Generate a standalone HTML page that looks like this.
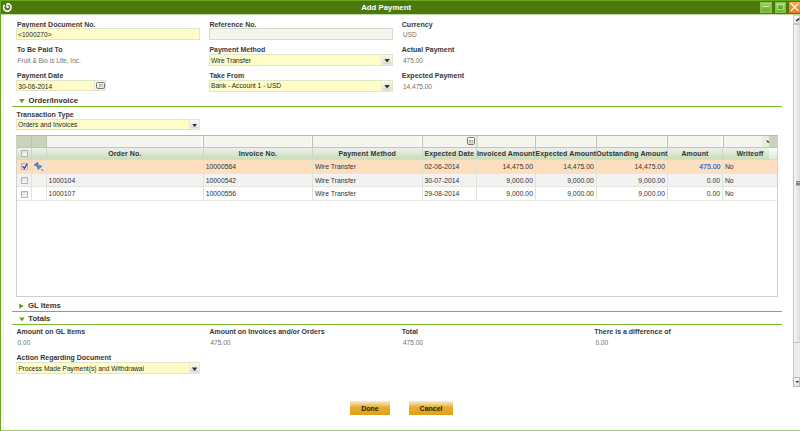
<!DOCTYPE html>
<html><head><meta charset="utf-8">
<style>
*{box-sizing:border-box;margin:0;padding:0}
html,body{width:800px;height:431px;overflow:hidden;background:#fff;font-family:"Liberation Sans",sans-serif}
.a{position:absolute;white-space:nowrap}
.lb{position:absolute;white-space:nowrap;font-weight:bold;font-size:7px;line-height:7px;color:#383838;margin-top:0.5px}
.vl{position:absolute;white-space:nowrap;font-size:6.5px;line-height:7px;color:#6f6f6f;margin-top:0.2px;transform:scaleY(1.17);transform-origin:0 5.8px}
.inp{position:absolute;background:#fffcc8;border:0.8px solid #e0e6c9}
.inp span{position:absolute;left:1px;font-size:6.65px;line-height:7px;color:#262626;white-space:nowrap;margin-top:-0.4px}
.dis{position:absolute;background:#f3f5ef;border:1px solid #d6dccb}
.btn{position:absolute;top:0;bottom:0;right:0;width:10.4px;background:linear-gradient(#f4f7ef 0%,#e9efe2 45%,#c9d8ba 100%);box-shadow:inset 0 0 0 0.8px rgba(255,255,255,.6);border-left:0.6px solid #e2ead8}
.btn:after{content:"";position:absolute;left:2.3px;top:4.1px;width:5.4px;height:3.4px;background:#303030;clip-path:polygon(0 0,100% 0,50% 100%)}
.sec{position:absolute;font-weight:bold;font-size:7.7px;line-height:8px;color:#333;white-space:nowrap}
.gl{position:absolute;height:1.25px;background:#7dbb2e;margin-top:0.5px}
.tri-d{position:absolute;width:5.6px;height:4.1px;background:#5ea816;clip-path:polygon(0 0,100% 0,50% 100%)}
.tri-r{position:absolute;width:4.6px;height:5.4px;background:#5ea816;clip-path:polygon(0 0,100% 50%,0 100%)}
.hd{font-weight:bold;font-size:7px;letter-spacing:0.1px;line-height:11.8px;height:11.8px;text-align:center;color:#333;overflow:visible}
.cl{font-size:6.85px;line-height:13.72px;color:#333}
</style></head><body>
<!-- window frame -->
<div class="a" style="left:0;top:0;width:800px;height:1px;background:#69a81b"></div>
<div class="a" style="left:0;top:1px;width:800px;height:12.5px;background:#4c790d"></div>
<div class="a" style="left:0;top:13.5px;width:800px;height:0.8px;background:#c5d8ad"></div>
<div class="a" style="left:0;top:430px;width:800px;height:1px;background:#a6d06e"></div>
<div class="a" style="left:0;top:0;width:1.1px;height:431px;background:#69a81b"></div>
<div class="a" style="left:3.2px;top:14.5px;width:0.6px;height:415px;background:#eeeeee"></div>
<!-- logo -->
<svg class="a" style="left:0;top:0" width="16" height="14" viewBox="0 0 16 14">
<path d="M6.95 3.65 A3.75 3.75 0 1 1 4.55 4.85" fill="none" stroke="#fff" stroke-width="1.55"/>
<path d="M6.95 3.4 L6.95 7.6" stroke="#fff" stroke-width="1.2"/>
<circle cx="7.7" cy="7.1" r="1.25" fill="#fff"/>
</svg>
<div class="a" style="left:361.2px;top:4px;font-weight:bold;font-size:7.8px;line-height:8px;color:#fff">Add Payment</div>
<!-- title buttons -->
<div class="a" style="left:760.3px;top:2px;width:11.3px;height:10.7px;background:linear-gradient(#9fd16c,#7dbd3a 45%,#6aae22);border:0.6px solid #86c050;box-shadow:inset 0 0 0 0.6px rgba(190,230,150,.45)"></div>
<div class="a" style="left:762.9px;top:6.1px;width:6.1px;height:1.4px;background:#dbeecb"></div>
<div class="a" style="left:775px;top:2px;width:10.7px;height:10.7px;background:linear-gradient(#9fd16c,#7dbd3a 45%,#6aae22);border:0.6px solid #86c050;box-shadow:inset 0 0 0 0.6px rgba(190,230,150,.45)"></div>
<div class="a" style="left:777px;top:3.9px;width:6.7px;height:5.7px;border:0.8px solid #b5de94;background:linear-gradient(#7cc040,#5aa018)"></div>
<div class="a" style="left:789px;top:2px;width:11px;height:10.7px;background:linear-gradient(#f6ad52,#e98d28 50%,#e3841c)"></div>
<svg class="a" style="left:789px;top:1.9px" width="11" height="11" viewBox="0 0 11 11"><path d="M2 1.5 L9.4 8.9 M9.4 1.5 L2 8.9" stroke="#fff" stroke-width="1.25"/></svg>
<!-- scrollbar -->
<div class="a" style="left:793px;top:14.5px;width:7px;height:372px;background:#ececec;border-left:1px solid #c8c8c8"></div>
<div class="a" style="left:793px;top:14.5px;width:7px;height:9.5px;background:linear-gradient(#fafafa,#e2e2e2);border:0.7px solid #cdcdcd"></div>
<div class="a" style="left:793.3px;top:24px;width:8px;height:319px;background:linear-gradient(90deg,#f8f8f8,#dadada);border:0.7px solid #c4c4c4;border-radius:0 0 2px 2px"></div>
<div class="a" style="left:793px;top:377px;width:7px;height:9.5px;background:linear-gradient(#fafafa,#dedede);border:0.7px solid #bdbdbd"></div>
<svg class="a" style="left:793px;top:14.5px" width="7" height="10" viewBox="0 0 7 10"><path d="M3.6 5.6 L5.9 3.9" stroke="#2a2a2a" stroke-width="1.4" stroke-linecap="round"/></svg>
<svg class="a" style="left:793px;top:377px" width="7" height="10" viewBox="0 0 7 10"><path d="M2.4 4.0 L6.2 4.0 L4.3 6.0 Z" fill="#333"/></svg>
<div class="a" style="left:796.2px;top:181.2px;width:3.8px;height:4.8px;background:repeating-linear-gradient(#858585 0 1px,#b5b5b5 1px 1.6px)"></div>

<!-- column 1 -->
<div class="lb" style="left:17px;top:20.4px">Payment Document No.</div>
<div class="inp" style="left:16px;top:28.4px;width:183.8px;height:11.2px"><span style="top:2.2px">&lt;1000270&gt;</span></div>
<div class="lb" style="left:17px;top:45.6px">To Be Paid To</div>
<div class="vl" style="left:17.6px;top:56.8px">Fruit &amp; Bio is Life, Inc.</div>
<div class="lb" style="left:17px;top:71.8px">Payment Date</div>
<div class="inp" style="left:16.2px;top:80.2px;width:78.6px;height:10.7px"><span style="top:2px">30-06-2014</span></div>
<div class="a" style="left:94.3px;top:80.1px;width:11.6px;height:10.9px;background:#f1f6ea;border:0.8px solid #dce8d0"></div>
<div class="a" style="left:96.1px;top:81.8px;width:8.8px;height:7.1px;border:1px solid #787878;border-radius:1.7px;background:linear-gradient(#fff,#dedede)"></div>
<div class="a" style="left:98.6px;top:84.3px;width:4.6px;height:2.8px;background:repeating-linear-gradient(90deg,rgba(140,140,140,.45) 0 0.6px,transparent 0.6px 1.5px),linear-gradient(rgba(140,140,140,.5) 0 0.6px,transparent 0.6px)"></div>

<!-- column 2 -->
<div class="lb" style="left:209.4px;top:20.4px">Reference No.</div>
<div class="dis" style="left:209px;top:28.4px;width:183.5px;height:11.2px"></div>
<div class="lb" style="left:209.4px;top:45.6px">Payment Method</div>
<div class="inp" style="left:209px;top:54px;width:183.5px;height:11.6px"><span style="top:2px">Wire Transfer</span><i class="btn"></i></div>
<div class="lb" style="left:209.4px;top:71.8px">Take From</div>
<div class="inp" style="left:209px;top:80px;width:183.5px;height:11.6px"><span style="top:1.6px">Bank - Account 1 - USD</span><i class="btn"></i></div>

<!-- column 3 -->
<div class="lb" style="left:401.8px;top:20.4px">Currency</div>
<div class="vl" style="left:403px;top:31.2px">USD</div>
<div class="lb" style="left:401.8px;top:45.6px">Actual Payment</div>
<div class="vl" style="left:403px;top:57.2px">475.00</div>
<div class="lb" style="left:401.8px;top:71.8px">Expected Payment</div>
<div class="vl" style="left:403px;top:82.6px">14,475.00</div>

<!-- Order/Invoice section -->
<div class="tri-d" style="left:19.05px;top:99.1px"></div>
<div class="sec" style="left:28.5px;top:96.5px">Order/Invoice</div>
<div class="gl" style="left:12px;top:105.2px;width:770.3px"></div>
<div class="lb" style="left:16.5px;top:110.7px">Transaction Type</div>
<div class="inp" style="left:16px;top:118.5px;width:184px;height:11px"><span style="top:2px">Orders and Invoices</span><i class="btn"></i></div>

<!-- grid placeholder -->
<!--GRID-->
<div class="a" style="left:16px;top:135px;width:762px;height:161.5px;border:0.8px solid #cfd1cb;border-top-color:#b5b9ae;background:#fff"></div>
<div class="a" style="left:16.8px;top:135.8px;width:29.4px;height:11.199999999999989px;background:#c9d3b9"></div>
<div class="a" style="left:46.2px;top:135.8px;width:723.0px;height:11.199999999999989px;background:#f3f5ee"></div>
<div class="a" style="left:769.2px;top:135.8px;width:8.299999999999955px;height:11.199999999999989px;background:#c9d3b9"></div>
<div class="a" style="left:31.2px;top:135.8px;width:0.8px;height:11.199999999999989px;background:#bcc2b4"></div>
<div class="a" style="left:45.8px;top:135.8px;width:0.8px;height:11.199999999999989px;background:#bcc2b4"></div>
<div class="a" style="left:201.2px;top:135.8px;width:1.5px;height:11.199999999999989px;background:#fbfcf9"></div>
<div class="a" style="left:202.7px;top:135.8px;width:1.2px;height:11.199999999999989px;background:#bcc2b4"></div>
<div class="a" style="left:310.5px;top:135.8px;width:1.5px;height:11.199999999999989px;background:#fbfcf9"></div>
<div class="a" style="left:312px;top:135.8px;width:1.2px;height:11.199999999999989px;background:#bcc2b4"></div>
<div class="a" style="left:420.0px;top:135.8px;width:1.5px;height:11.199999999999989px;background:#fbfcf9"></div>
<div class="a" style="left:421.5px;top:135.8px;width:1.2px;height:11.199999999999989px;background:#bcc2b4"></div>
<div class="a" style="left:533.5px;top:135.8px;width:1.5px;height:11.199999999999989px;background:#fbfcf9"></div>
<div class="a" style="left:535px;top:135.8px;width:1.2px;height:11.199999999999989px;background:#bcc2b4"></div>
<div class="a" style="left:594.5px;top:135.8px;width:1.5px;height:11.199999999999989px;background:#fbfcf9"></div>
<div class="a" style="left:596px;top:135.8px;width:1.2px;height:11.199999999999989px;background:#bcc2b4"></div>
<div class="a" style="left:665.5px;top:135.8px;width:1.5px;height:11.199999999999989px;background:#fbfcf9"></div>
<div class="a" style="left:667px;top:135.8px;width:1.2px;height:11.199999999999989px;background:#bcc2b4"></div>
<div class="a" style="left:721.0px;top:135.8px;width:1.5px;height:11.199999999999989px;background:#fbfcf9"></div>
<div class="a" style="left:722.5px;top:135.8px;width:1.2px;height:11.199999999999989px;background:#bcc2b4"></div>
<div class="a" style="left:464.6px;top:135.8px;width:11.6px;height:11.199999999999989px;background:#eef3e4"></div>
<div class="a" style="left:476.2px;top:135.8px;width:1.4px;height:11.199999999999989px;background:#d5e0c8"></div>
<div class="a" style="left:466.5px;top:137.4px;width:8.6px;height:7.5px;border:1px solid #787878;border-radius:1.6px;background:linear-gradient(#fff,#d8d8d8)"></div>
<div class="a" style="left:469px;top:140.3px;width:4.4px;height:2.6px;background:repeating-linear-gradient(90deg,rgba(140,140,140,.45) 0 0.6px,transparent 0.6px 1.5px),linear-gradient(rgba(140,140,140,.5) 0 0.6px,transparent 0.6px)"></div>
<div class="a" style="left:761.9px;top:135.8px;width:7.3px;height:11.199999999999989px;background:#e6eedd"></div>
<svg class="a" style="left:760px;top:136px" width="10" height="10" viewBox="0 0 10 10"><path d="M5.9 4.5 L8.9 5.0 L8.5 7.2 Z" fill="#222"/></svg>
<div class="a" style="left:16.8px;top:147px;width:760.7px;height:0.8px;background:#c0c6b8"></div>
<div class="a" style="left:16.8px;top:147.8px;width:752.4000000000001px;height:11.799999999999983px;background:linear-gradient(#eef0ec,#c7dbb6)"></div>
<div class="a" style="left:769.2px;top:147.8px;width:8.299999999999955px;height:11.799999999999983px;background:linear-gradient(#fbfcfa,#dde9d2)"></div>
<div class="a" style="left:31.200000000000003px;top:147.8px;width:0.8px;height:11.799999999999983px;background:#cdd3c6"></div>
<div class="a" style="left:45.800000000000004px;top:147.8px;width:0.8px;height:11.799999999999983px;background:#cdd3c6"></div>
<div class="a" style="left:202.9px;top:147.8px;width:0.8px;height:11.799999999999983px;background:#cdd3c6"></div>
<div class="a" style="left:312.1px;top:147.8px;width:0.8px;height:11.799999999999983px;background:#cdd3c6"></div>
<div class="a" style="left:421.6px;top:147.8px;width:0.8px;height:11.799999999999983px;background:#cdd3c6"></div>
<div class="a" style="left:475.90000000000003px;top:147.8px;width:0.8px;height:11.799999999999983px;background:#cdd3c6"></div>
<div class="a" style="left:535.1px;top:147.8px;width:0.8px;height:11.799999999999983px;background:#cdd3c6"></div>
<div class="a" style="left:595.9px;top:147.8px;width:0.8px;height:11.799999999999983px;background:#cdd3c6"></div>
<div class="a" style="left:667.1px;top:147.8px;width:0.8px;height:11.799999999999983px;background:#cdd3c6"></div>
<div class="a" style="left:722.1px;top:147.8px;width:0.8px;height:11.799999999999983px;background:#cdd3c6"></div>
<div class="a" style="left:20.7px;top:149.9px;width:7.2px;height:6.9px;border:0.8px solid #b2b3b0;border-radius:0.8px;background:linear-gradient(160deg,#d9d9d9,#f6f6f6 70%)"></div>
<div class="a hd" style="left:46.2px;width:157.10000000000002px;top:147.8px">Order No.</div>
<div class="a hd" style="left:203.3px;width:109.19999999999999px;top:147.8px">Invoice No.</div>
<div class="a hd" style="left:312.5px;width:109.5px;top:147.8px">Payment Method</div>
<div class="a hd" style="left:422px;width:54.30000000000001px;top:147.8px">Expected Date</div>
<div class="a hd" style="left:476.3px;width:59.19999999999999px;top:147.8px">Invoiced Amount</div>
<div class="a hd" style="left:535.5px;width:60.799999999999955px;top:147.8px">Expected Amount</div>
<div class="a hd" style="left:596.3px;width:71.20000000000005px;top:147.8px">Outstanding Amount</div>
<div class="a hd" style="left:667.5px;width:55.0px;top:147.8px">Amount</div>
<div class="a hd" style="left:722.5px;width:55.0px;top:147.8px">Writeoff</div>
<div class="a" style="left:16.8px;top:159.2px;width:760.7px;height:0.6px;background:#cfe2c0"></div>
<div class="a" style="left:16.8px;top:159.8px;width:760.7px;height:13.72px;background:#fddfc0"></div>
<div class="a" style="left:16.8px;top:172.72px;width:760.7px;height:0.8px;background:#e3e7dc"></div>
<div class="a" style="left:31.200000000000003px;top:159.8px;width:0.8px;height:13.72px;background:#dfe4d8"></div>
<div class="a" style="left:45.800000000000004px;top:159.8px;width:0.8px;height:13.72px;background:#dfe4d8"></div>
<div class="a" style="left:202.9px;top:159.8px;width:0.8px;height:13.72px;background:#dfe4d8"></div>
<div class="a" style="left:312.1px;top:159.8px;width:0.8px;height:13.72px;background:#dfe4d8"></div>
<div class="a" style="left:421.6px;top:159.8px;width:0.8px;height:13.72px;background:#dfe4d8"></div>
<div class="a" style="left:475.90000000000003px;top:159.8px;width:0.8px;height:13.72px;background:#dfe4d8"></div>
<div class="a" style="left:535.1px;top:159.8px;width:0.8px;height:13.72px;background:#dfe4d8"></div>
<div class="a" style="left:595.9px;top:159.8px;width:0.8px;height:13.72px;background:#dfe4d8"></div>
<div class="a" style="left:667.1px;top:159.8px;width:0.8px;height:13.72px;background:#dfe4d8"></div>
<div class="a" style="left:722.1px;top:159.8px;width:0.8px;height:13.72px;background:#dfe4d8"></div>
<div class="a" style="left:20.7px;top:163.10000000000002px;width:7.2px;height:7.4px;border:0.8px solid #b2b3b0;border-radius:0.8px;background:linear-gradient(160deg,#d9d9d9,#f6f6f6 70%)"></div>
<svg class="a" style="left:20.7px;top:163.10000000000002px" width="8" height="8" viewBox="0 0 8 8"><path d="M1.9 3.6 L3.4 5.4 L5.9 1.3" fill="none" stroke="#2c4296" stroke-width="1.25" stroke-linecap="round"/></svg>
<svg class="a" style="left:31px;top:160.0px" width="16" height="14" viewBox="0 0 16 14"><path d="M10.3 9.3 L12.2 10.9" stroke="#4a4d5c" stroke-width="1"/><path d="M3.0 5.0 L6.6 2.2 L7.6 5.3 L10.9 6.2 L7.0 9.6 L6.3 6.4 Z" fill="#3f7bd9" stroke="#3a6fc8" stroke-width="0.6" stroke-linejoin="round"/><path d="M5.2 4.2 L7.0 5.8 L9.0 7.0" stroke="#86b2ee" stroke-width="0.7" fill="none"/></svg>
<div class="a cl" style="left:205.70000000000002px;top:159.8px;color:#333">10000564</div>
<div class="a cl" style="left:314.9px;top:159.8px;color:#333">Wire Transfer</div>
<div class="a cl" style="left:424.4px;top:159.8px;color:#333">02-06-2014</div>
<div class="a cl" style="left:476.3px;width:56.69999999999999px;text-align:right;top:159.8px;color:#333">14,475.00</div>
<div class="a cl" style="left:535.5px;width:58.299999999999955px;text-align:right;top:159.8px;color:#333">14,475.00</div>
<div class="a cl" style="left:596.3px;width:68.70000000000005px;text-align:right;top:159.8px;color:#333">14,475.00</div>
<div class="a cl" style="left:667.5px;width:52.5px;text-align:right;top:159.8px;color:#2f72d4;will-change:transform;-webkit-text-stroke:0.25px #3a78d0">475.00</div>
<div class="a cl" style="left:724.9px;top:159.8px;color:#333">No</div>
<div class="a" style="left:16.8px;top:173.52px;width:760.7px;height:13.72px;background:#f2f2f2"></div>
<div class="a" style="left:16.8px;top:186.44px;width:760.7px;height:0.8px;background:#e3e7dc"></div>
<div class="a" style="left:31.200000000000003px;top:173.52px;width:0.8px;height:13.72px;background:#dfe4d8"></div>
<div class="a" style="left:45.800000000000004px;top:173.52px;width:0.8px;height:13.72px;background:#dfe4d8"></div>
<div class="a" style="left:202.9px;top:173.52px;width:0.8px;height:13.72px;background:#dfe4d8"></div>
<div class="a" style="left:312.1px;top:173.52px;width:0.8px;height:13.72px;background:#dfe4d8"></div>
<div class="a" style="left:421.6px;top:173.52px;width:0.8px;height:13.72px;background:#dfe4d8"></div>
<div class="a" style="left:475.90000000000003px;top:173.52px;width:0.8px;height:13.72px;background:#dfe4d8"></div>
<div class="a" style="left:535.1px;top:173.52px;width:0.8px;height:13.72px;background:#dfe4d8"></div>
<div class="a" style="left:595.9px;top:173.52px;width:0.8px;height:13.72px;background:#dfe4d8"></div>
<div class="a" style="left:667.1px;top:173.52px;width:0.8px;height:13.72px;background:#dfe4d8"></div>
<div class="a" style="left:722.1px;top:173.52px;width:0.8px;height:13.72px;background:#dfe4d8"></div>
<div class="a" style="left:20.7px;top:176.82000000000002px;width:7.2px;height:7.4px;border:0.8px solid #b2b3b0;border-radius:0.8px;background:linear-gradient(160deg,#d9d9d9,#f6f6f6 70%)"></div>
<div class="a cl" style="left:48.6px;top:173.52px;color:#333">1000104</div>
<div class="a cl" style="left:205.70000000000002px;top:173.52px;color:#333">10000542</div>
<div class="a cl" style="left:314.9px;top:173.52px;color:#333">Wire Transfer</div>
<div class="a cl" style="left:424.4px;top:173.52px;color:#333">30-07-2014</div>
<div class="a cl" style="left:476.3px;width:56.69999999999999px;text-align:right;top:173.52px;color:#333">9,000.00</div>
<div class="a cl" style="left:535.5px;width:58.299999999999955px;text-align:right;top:173.52px;color:#333">9,000.00</div>
<div class="a cl" style="left:596.3px;width:68.70000000000005px;text-align:right;top:173.52px;color:#333">9,000.00</div>
<div class="a cl" style="left:667.5px;width:52.5px;text-align:right;top:173.52px;color:#333">0.00</div>
<div class="a cl" style="left:724.9px;top:173.52px;color:#333">No</div>
<div class="a" style="left:16.8px;top:187.24px;width:760.7px;height:13.72px;background:#ffffff"></div>
<div class="a" style="left:16.8px;top:200.16px;width:760.7px;height:0.8px;background:#e3e7dc"></div>
<div class="a" style="left:31.200000000000003px;top:187.24px;width:0.8px;height:13.72px;background:#dfe4d8"></div>
<div class="a" style="left:45.800000000000004px;top:187.24px;width:0.8px;height:13.72px;background:#dfe4d8"></div>
<div class="a" style="left:202.9px;top:187.24px;width:0.8px;height:13.72px;background:#dfe4d8"></div>
<div class="a" style="left:312.1px;top:187.24px;width:0.8px;height:13.72px;background:#dfe4d8"></div>
<div class="a" style="left:421.6px;top:187.24px;width:0.8px;height:13.72px;background:#dfe4d8"></div>
<div class="a" style="left:475.90000000000003px;top:187.24px;width:0.8px;height:13.72px;background:#dfe4d8"></div>
<div class="a" style="left:535.1px;top:187.24px;width:0.8px;height:13.72px;background:#dfe4d8"></div>
<div class="a" style="left:595.9px;top:187.24px;width:0.8px;height:13.72px;background:#dfe4d8"></div>
<div class="a" style="left:667.1px;top:187.24px;width:0.8px;height:13.72px;background:#dfe4d8"></div>
<div class="a" style="left:722.1px;top:187.24px;width:0.8px;height:13.72px;background:#dfe4d8"></div>
<div class="a" style="left:20.7px;top:190.54000000000002px;width:7.2px;height:7.4px;border:0.8px solid #b2b3b0;border-radius:0.8px;background:linear-gradient(160deg,#d9d9d9,#f6f6f6 70%)"></div>
<div class="a cl" style="left:48.6px;top:187.24px;color:#333">1000107</div>
<div class="a cl" style="left:205.70000000000002px;top:187.24px;color:#333">10000556</div>
<div class="a cl" style="left:314.9px;top:187.24px;color:#333">Wire Transfer</div>
<div class="a cl" style="left:424.4px;top:187.24px;color:#333">29-08-2014</div>
<div class="a cl" style="left:476.3px;width:56.69999999999999px;text-align:right;top:187.24px;color:#333">9,000.00</div>
<div class="a cl" style="left:535.5px;width:58.299999999999955px;text-align:right;top:187.24px;color:#333">9,000.00</div>
<div class="a cl" style="left:596.3px;width:68.70000000000005px;text-align:right;top:187.24px;color:#333">9,000.00</div>
<div class="a cl" style="left:667.5px;width:52.5px;text-align:right;top:187.24px;color:#333">0.00</div>
<div class="a cl" style="left:724.9px;top:187.24px;color:#333">No</div>
<!--/GRID-->

<!-- GL Items / Totals -->
<div class="tri-r" style="left:19.2px;top:303.4px"></div>
<div class="sec" style="left:28.1px;top:302px">GL Items</div>
<div class="gl" style="left:12px;top:310.7px;width:770.3px"></div>
<div class="tri-d" style="left:19.1px;top:317.4px"></div>
<div class="sec" style="left:28.3px;top:315px">Totals</div>
<div class="gl" style="left:12px;top:323.5px;width:770.3px"></div>

<div class="lb" style="left:16.5px;top:327.8px">Amount on GL Items</div>
<div class="vl" style="left:17.6px;top:339px">0.00</div>
<div class="lb" style="left:209.4px;top:327.8px">Amount on Invoices and/or Orders</div>
<div class="vl" style="left:210.5px;top:339px">475.00</div>
<div class="lb" style="left:401.8px;top:327.8px">Total</div>
<div class="vl" style="left:403px;top:339px">475.00</div>
<div class="lb" style="left:594.2px;top:327.8px">There is a difference of</div>
<div class="vl" style="left:595.4px;top:339px">0.00</div>

<div class="lb" style="left:16.5px;top:353.4px">Action Regarding Document</div>
<div class="inp" style="left:16.2px;top:362.4px;width:183.8px;height:11.4px"><span style="top:2.2px">Process Made Payment(s) and Withdrawal</span><i class="btn"></i></div>

<!-- buttons -->
<div class="a" style="left:350.2px;top:401px;width:39.6px;height:13.8px;background:linear-gradient(#fbefd0 0%,#e6ad2c 45%,#e0a11c 100%);font-weight:bold;font-size:7px;line-height:15px;text-align:center;color:#2e2408">Done</div>
<div class="a" style="left:409px;top:401px;width:44.2px;height:13.8px;background:linear-gradient(#fbefd0 0%,#e6ad2c 45%,#e0a11c 100%);font-weight:bold;font-size:7px;line-height:15px;text-align:center;color:#2e2408">Cancel</div>
</body></html>
